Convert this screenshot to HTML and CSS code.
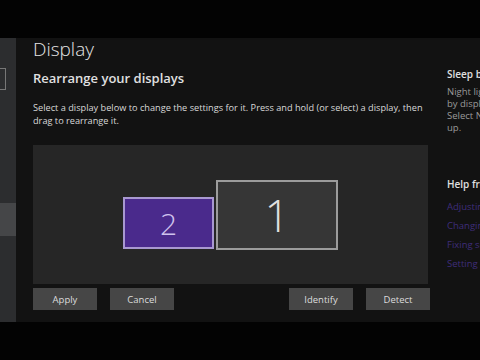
FILE: index.html
```html
<!DOCTYPE html>
<html lang="en">
<head>
  <meta charset="UTF-8" />
  <title>Display</title>
  <link rel="stylesheet" href="styles.css">
</head>
<body>
  <div class="bar"></div>

  <div class="app">
    <!-- left nav, mostly cut off -->
    <nav class="nav">
      <div class="nav-search"></div>
      <div class="nav-item"></div>
    </nav>

    <main class="main">
      <h1>Display</h1>
      <h2>Rearrange your displays</h2>
      <p class="hint">Select a display below to change the settings for it. Press and hold (or select) a display, then drag to rearrange it.</p>

      <div class="canvas">
        <div class="monitor monitor-2">2</div>
        <div class="monitor monitor-1">1</div>
      </div>

      <div class="actions">
        <div class="group">
          <button>Apply</button>
          <button>Cancel</button>
        </div>
        <div class="group">
          <button>Identify</button>
          <button>Detect</button>
        </div>
      </div>
    </main>

    <aside class="side">
      <h3>Sleep better</h3>
      <p>Night light can help you get to sleep<br>by displaying warmer colors at night.<br>Select Night light settings to set things<br>up.</p>
      <h3 class="help">Help from the web</h3>
      <a>Adjusting font size</a>
      <a>Changing screen brightness</a>
      <a>Fixing screen flickering</a>
      <a>Setting up multiple monitors</a>
    </aside>
  </div>

  <div class="bar"></div>
</body>
</html>
```

FILE: styles.css
```css
body {
  margin: 0;
  background: #000;
  font-family: "Open Sans", "Noto Sans", sans-serif;
  color: #dedede;
  width: 480px;
  height: 360px;
  overflow: hidden;
}
.bar {
  height: 38px;
  background: #030303;
}
.app {
  display: flex;
  height: 284px;
  background: #121212;
  overflow: hidden;
}
.nav {
  width: 16px;
  flex: none;
  background: #2c2d2f;
  padding-top: 30px;
  box-sizing: border-box;
}
.nav-search {
  width: 5px;
  height: 20px;
  border: 1px solid #777;
  border-left: none;
}
.nav-item {
  height: 33px;
  margin-top: 113px;
  background: #454648;
}
.main {
  width: 397px;
  flex: none;
  padding: 0 7px 0 17px;
}
h1 {
  margin: 0;
  font-size: 19px;
  font-weight: 300;
  line-height: 22px;
  color: #e4e4e4;
}
h2 {
  margin: 9px 0 0;
  font-size: 13px;
  font-weight: 600;
  line-height: 18px;
  color: #e0e0e0;
}
.hint {
  margin: 14px 0 0;
  font-size: 9.2px;
  line-height: 13px;
  color: #d8d8d8;
}
.canvas {
  position: relative;
  width: 395px;
  height: 139px;
  margin-top: 18px;
  background: #262626;
}
.monitor {
  position: absolute;
  box-sizing: border-box;
  display: flex;
  align-items: center;
  justify-content: center;
  font-weight: 300;
}
.monitor-2 {
  left: 90px;
  top: 52px;
  width: 91px;
  height: 52px;
  background: #4a2a8c;
  border: 2px solid #a898d0;
  color: #cfc2ee;
  font-size: 30px;
}
.monitor-1 {
  left: 183px;
  top: 35px;
  width: 122px;
  height: 70px;
  background: #363636;
  border: 2px solid #9c9c9c;
  color: #e0e0e0;
  font-size: 44px;
}
.actions {
  display: flex;
  justify-content: space-between;
  margin-top: 4px;
}
.group {
  display: flex;
  gap: 13px;
}
button {
  width: 64px;
  height: 22px;
  border: none;
  background: #464646;
  color: #dcdcdc;
  font-family: inherit;
  font-size: 9.5px;
  padding: 0;
}
.side {
  flex: 1;
  min-width: 0;
  padding-left: 10px;
  padding-top: 29px;
  white-space: nowrap;
  overflow: hidden;
}
h3 {
  margin: 0;
  font-size: 10px;
  font-weight: 600;
  line-height: 14px;
  color: #e0e0e0;
}
.side p {
  margin: 5px 0 0;
  font-size: 9.5px;
  line-height: 12px;
  color: #9a9a9a;
}
.help {
  margin-top: 43px;
  padding-bottom: 4px;
}
.side a {
  display: block;
  margin-top: 5px;
  font-size: 9.5px;
  line-height: 14px;
  color: #3f2d7a;
}
```
